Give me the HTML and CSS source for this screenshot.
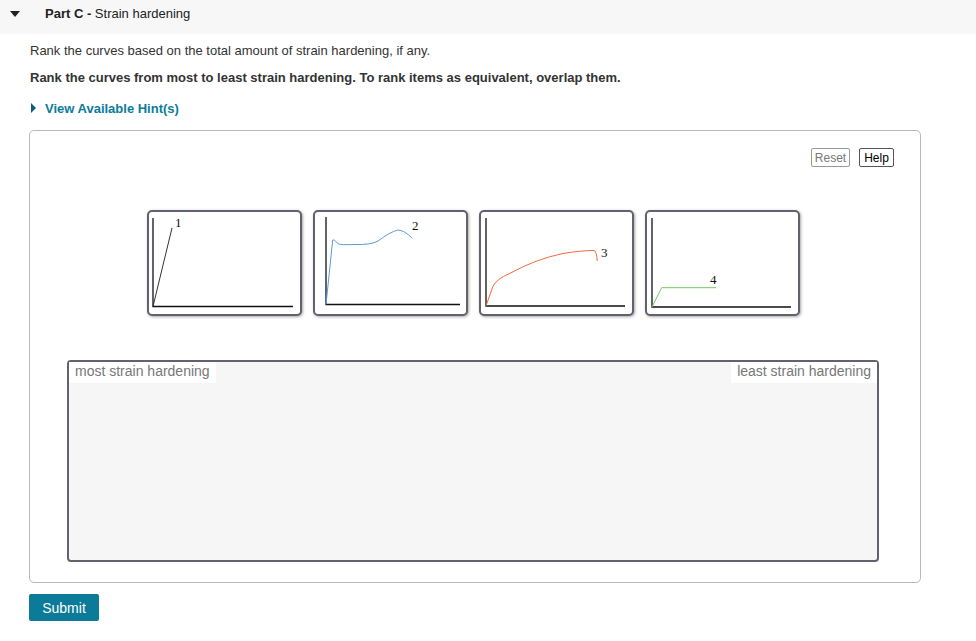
FILE: index.html
```html
<!DOCTYPE html>
<html lang="en">
<head>
  <meta charset="UTF-8">
  <title>Part C - Strain hardening</title>
  <link rel="stylesheet" href="styles.css">
</head>
<body>
<div class="part-header">
  <span class="caret-down"></span>
  <span class="part-title"><b>Part C -</b> Strain hardening</span>
</div>

<div class="part-body">
  <p class="prompt">Rank the curves based on the total amount of strain hardening, if any.</p>
  <p class="prompt bold">Rank the curves from most to least strain hardening. To rank items as equivalent, overlap them.</p>
  <a class="hint-link" href="#"><span class="caret-right"></span>View Available Hint(s)</a>

  <div class="ranking">
    <div class="tools">
      <button class="tool-btn reset">Reset</button>
      <button class="tool-btn help">Help</button>
    </div>

    <div class="cards">
      <div class="card">
        <svg width="151" height="102" viewBox="0 0 151 102">
          <path class="axis" d="M4 6 V94.5 H144"/>
          <path d="M4 94.5 L23 16" stroke="#333" stroke-width="1" fill="none"/>
          <text x="26" y="15">1</text>
        </svg>
      </div>
      <div class="card">
        <svg width="151" height="102" viewBox="0 0 151 102">
          <path class="axis" d="M11 5 V92.5 H145"/>
          <path d="M11 92.5 L17.7 28 Q19 27 23.3 32 Q26 33 40 32.5 Q56 33 63 29 Q75 20 82.7 18 Q89 18 97.3 26.3" stroke="#5b9bd5" stroke-width="1" fill="none"/>
          <text x="97" y="18">2</text>
        </svg>
      </div>
      <div class="card">
        <svg width="151" height="102" viewBox="0 0 151 102">
          <path class="axis" d="M5 6 V94 H144"/>
          <path d="M5 94 L11.7 75 Q15 67 29 61.3 Q55 47 82 41.5 Q100 38.5 113 38.5 Q115.5 39 116.3 49" stroke="#f26a3e" stroke-width="1" fill="none"/>
          <text x="120" y="44.5">3</text>
        </svg>
      </div>
      <div class="card">
        <svg width="151" height="102" viewBox="0 0 151 102">
          <path class="axis" d="M5 6 V95 H144"/>
          <path d="M5 95 L14.7 75.7 H69" stroke="#74c866" stroke-width="1" fill="none"/>
          <text x="63" y="72">4</text>
        </svg>
      </div>
    </div>

    <div class="dropzone">
      <span class="zone-label">most strain hardening</span>
      <span class="zone-label">least strain hardening</span>
    </div>
  </div>

  <button class="submit">Submit</button>
</div>
</body>
</html>
```

FILE: styles.css
```css
body {
  margin: 0;
  font-family: "Liberation Sans", Arial, sans-serif;
  color: #333;
  background: #fff;
}

.part-header {
  display: flex;
  align-items: center;
  height: 34px;
  padding-left: 10px;
  background: #f7f7f7;
  font-size: 13px;
  color: #222;
}

.caret-down {
  width: 0;
  height: 0;
  border-left: 5px solid transparent;
  border-right: 5px solid transparent;
  border-top: 6px solid #222;
  margin-right: 25px;
  margin-top: -7px;
}

.part-title {
  margin-top: -8px;
}

.part-body {
  padding: 0 29px;
}

.prompt {
  margin: 9px 0 0 1px;
  font-size: 13px;
  line-height: 16px;
}

.prompt.bold {
  margin-top: 11px;
  font-weight: bold;
}

.hint-link {
  display: flex;
  align-items: center;
  margin: 14px 0 0 2px;
  height: 16px;
  font-size: 13px;
  font-weight: bold;
  color: #0b7b9b;
  text-decoration: none;
}

.caret-right {
  width: 0;
  height: 0;
  border-top: 5px solid transparent;
  border-bottom: 5px solid transparent;
  border-left: 5px solid #0b5f7d;
  margin-right: 9px;
}

.ranking {
  width: 890px;
  margin-top: 14px;
  border: 1px solid #b8b8b8;
  border-radius: 5px;
  padding: 17px 0 20px;
}

.tools {
  display: flex;
  justify-content: flex-end;
  gap: 9px;
  padding-right: 26px;
}

.tool-btn {
  height: 19px;
  padding: 0;
  font-family: "Liberation Sans", Arial, sans-serif;
  font-size: 12px;
  background: #fff;
  border-radius: 2px;
  cursor: pointer;
}

.tool-btn.reset {
  width: 39px;
  border: 1px solid #999;
  color: #777;
}

.tool-btn.help {
  width: 35px;
  border: 1px solid #555;
  color: #000;
}

.cards {
  display: flex;
  justify-content: center;
  gap: 11px;
  margin-top: 43px;
  padding-right: 3px;
}

.card {
  width: 151px;
  height: 102px;
  border: 2px solid #62626e;
  border-radius: 5px;
  background: #fff;
  box-shadow: 1px 1px 3px rgba(0, 0, 0, 0.35);
}

.card svg {
  display: block;
}

.card .axis {
  fill: none;
  stroke: #111;
  stroke-width: 1.3;
}

.card text {
  font-family: "Liberation Serif", "Times New Roman", serif;
  font-size: 13px;
  fill: #111;
}

.dropzone {
  display: flex;
  justify-content: space-between;
  align-items: flex-start;
  width: 808px;
  height: 198px;
  margin: 44px 0 0 37px;
  border: 2px solid #62626e;
  border-radius: 4px;
  background: #f6f6f6;
}

.zone-label {
  padding: 1px 6px 3px;
  background: #fff;
  color: #777;
  font-size: 14px;
  line-height: 17px;
}

.submit {
  margin-top: 11px;
  width: 70px;
  height: 27px;
  border: none;
  border-radius: 2px;
  background: #0b7b99;
  color: #fff;
  font-family: "Liberation Sans", Arial, sans-serif;
  font-size: 14px;
  cursor: pointer;
}
```
